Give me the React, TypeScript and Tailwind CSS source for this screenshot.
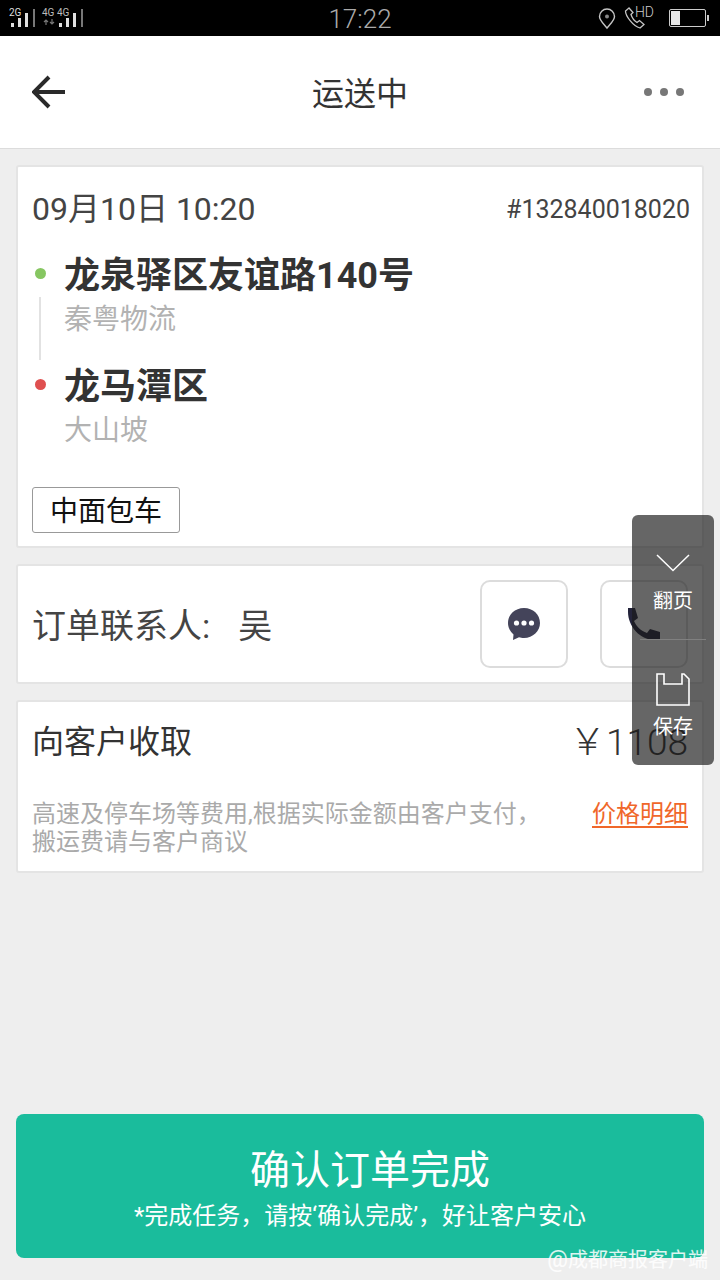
import React from "react";

const FONT = { fontFamily: 'Roboto, "Noto Sans CJK SC", "Noto Sans", sans-serif' };

const SignalIcons = () => (
  <svg width="90" height="36" viewBox="0 0 90 36" className="absolute left-0 top-0">
    <text x="9" y="16" fontSize="10" fill="#ddd" fontFamily="Roboto, sans-serif">2G</text>
    <rect x="11" y="23" width="3" height="4" fill="#e0e0e0" />
    <rect x="18" y="18" width="3" height="9" fill="#e0e0e0" />
    <rect x="25" y="13" width="3" height="14" fill="#e0e0e0" />
    <rect x="33" y="9" width="2" height="18" fill="#777" />
    <text x="42" y="16" fontSize="10" fill="#bbb" fontFamily="Roboto, sans-serif">4G</text>
    <text x="57" y="16" fontSize="10" fill="#bbb" fontFamily="Roboto, sans-serif">4G</text>
    <path d="M46 25 V20 M44 22 L46 20 L48 22 M52 19 V24 M50 22 L52 24 L54 22" stroke="#777" strokeWidth="1.2" fill="none" />
    <rect x="59" y="23" width="3" height="4" fill="#e0e0e0" />
    <rect x="66" y="18" width="3" height="9" fill="#e0e0e0" />
    <rect x="73" y="13" width="3" height="14" fill="#e0e0e0" />
    <rect x="81" y="9" width="2" height="18" fill="#777" />
  </svg>
);

const StatusBar = () => (
  <div className="h-9 bg-black relative flex items-center justify-center shrink-0">
    <SignalIcons />
    <span className="text-[26px] leading-none text-[#aaa] font-light mt-[2px]">17:22</span>
    <div className="absolute right-[11px] top-[6px] flex items-start">
      <svg width="18" height="22" viewBox="0 0 18 22" fill="none" className="mt-[2px]">
        <path
          d="M9 20 C6 16 1.5 12.5 1.5 8.5 A7.5 7.5 0 0 1 16.5 8.5 C16.5 12.5 12 16 9 20 Z"
          stroke="#c4c4c4"
          strokeWidth="1.4"
        />
        <circle cx="9" cy="8.5" r="2" fill="#888" />
      </svg>
      <svg width="22" height="22" viewBox="0 0 22 22" fill="none" className="ml-[8px] mt-[1px]">
        <path
          d="M5 1 L1.5 4 C1.5 9 9 19 16 21 L20 17.5 L15.5 13.5 L13 15.5 C10.5 14 8 10.5 7 7.5 L9 5.5 Z"
          stroke="#c4c4c4"
          strokeWidth="1.3"
        />
      </svg>
      <span className="text-[14px] leading-none text-[#ccc] ml-[-11px] mt-[-1px] font-light">HD</span>
      <div className="ml-[15px] mt-[3px] flex items-center">
        <div className="w-[37px] h-[18px] border border-[#ccc] rounded-[2px] p-[1px]">
          <div className="w-[9px] h-full bg-[#e6e6e6]" />
        </div>
        <span className="w-[2px] h-[6px] ml-[1px] bg-[#ccc]" />
      </div>
    </div>
  </div>
);

const Header = () => (
  <div className="h-[113px] bg-white border-b border-[#dcdcdc] flex items-center justify-between pl-[32px] pr-[36px] relative shrink-0">
    <svg width="34" height="34" viewBox="0 0 34 34" fill="none">
      <path d="M33 17 H3 M17 2 L2 17 L17 32" stroke="#2a2a2a" strokeWidth="4" />
    </svg>
    <span className="absolute inset-x-0 mt-[4px] text-center text-[32px] leading-none text-[#333]">运送中</span>
    <div className="flex gap-[8px]">
      <span className="w-2 h-2 rounded-full bg-[#777]" />
      <span className="w-2 h-2 rounded-full bg-[#777]" />
      <span className="w-2 h-2 rounded-full bg-[#777]" />
    </div>
  </div>
);

const Stop = ({ dot, title, sub }: { dot: string; title: string; sub: string }) => (
  <div className="flex pl-[3px]">
    <span className={`w-[11px] h-[11px] rounded-full mt-[14px] ${dot}`} />
    <div className="ml-[18px]">
      <div className="text-[36px] leading-[44px] font-bold text-[#333]">{title}</div>
      <div className="text-[28px] leading-[38px] mt-[3px] text-[#b2b2b2]">{sub}</div>
    </div>
  </div>
);

const OrderCard = () => (
  <div className="h-[383px] bg-white border-2 border-[#e4e4e4] rounded-[3px] pl-[14px] pr-[12px] pt-[20px]">
    <div className="flex items-center justify-between h-[44px]">
      <span className="text-[32px] leading-none text-[#444]">09月10日 10:20</span>
      <span className="text-[25px] leading-none text-[#444]">#132840018020</span>
    </div>
    <div className="mt-[23px] relative">
      <Stop dot="bg-[#86c661]" title="龙泉驿区友谊路140号" sub="秦粤物流" />
      <span className="absolute left-[7px] top-[43px] w-[2px] h-[63px] bg-[#e2e2e2]" />
      <div className="mt-[26px]">
        <Stop dot="bg-[#df5050]" title="龙马潭区" sub="大山坡" />
      </div>
    </div>
    <div className="mt-[37px] pt-[4px] w-[148px] h-[46px] border border-[#999] rounded-[3px] flex items-center justify-center text-[28px] leading-none text-[#111]">
      中面包车
    </div>
  </div>
);

const ContactCard = () => (
  <div className="mt-[16px] h-[120px] bg-white border-2 border-[#e4e4e4] rounded-[3px] pl-[14px] pr-[14px] flex items-center">
    <span className="text-[34px] leading-none text-[#444] flex-1 mt-[4px]">
      订单联系人:<span className="ml-[28px]">吴</span>
    </span>
    <div className="w-[88px] h-[88px] border-2 border-[#dcdcdc] rounded-[10px] flex items-center justify-center">
      <svg width="34" height="34" viewBox="0 0 34 34">
        <path d="M17 1 C26 1 33 7.5 33 16 C33 24 26 31 17 31 C15 31 13.5 30.7 12 30.2 L6 33 L6.5 27.5 C3 24.5 1 20.5 1 16 C1 7.5 8 1 17 1 Z" fill="#44445a" />
        <circle cx="9.5" cy="16" r="2.6" fill="#fff" />
        <circle cx="17" cy="16" r="2.6" fill="#fff" />
        <circle cx="24.5" cy="16" r="2.6" fill="#fff" />
      </svg>
    </div>
    <div className="ml-[32px] w-[88px] h-[88px] border-2 border-[#dcdcdc] rounded-[10px] flex items-center justify-center">
      <svg width="34" height="34" viewBox="0 0 34 34">
        <path d="M1 1 H8 L11 11 L7 14 C9 19 14 24 20 26 L23 22 L33 25 V33 H27 C13 33 1 19 1 5 Z" fill="#23233a" />
      </svg>
    </div>
  </div>
);

const FeeCard = () => (
  <div className="mt-[16px] h-[173px] bg-white border-2 border-[#e4e4e4] rounded-[3px] pl-[14px] pr-[14px] pt-[20px]">
    <div className="flex items-center justify-between h-[40px]">
      <span className="text-[32px] leading-none text-[#333]">向客户收取</span>
      <span className="text-[37px] leading-none text-[#333] font-light">￥1108</span>
    </div>
    <div className="mt-[38px] flex justify-between items-start">
      <p className="text-[24px] leading-[28px] text-[#aaa]">
        高速及停车场等费用,根据实际金额由客户支付，
        <br />
        搬运费请与客户商议
      </p>
      <span className="text-[24px] leading-[28px] text-[#f0672a] underline underline-offset-4">价格明细</span>
    </div>
  </div>
);

const FloatPanel = () => (
  <div className="absolute left-[632px] top-[515px] w-[82px] h-[250px] rounded-[6px] bg-[#1b1b1b]/[0.67] flex flex-col items-center text-white">
    <svg width="34" height="18" viewBox="0 0 34 18" fill="none" className="mt-[39px]">
      <path d="M1 1 L17 16.5 L33 1" stroke="#fff" strokeWidth="1.5" />
    </svg>
    <span className="text-[20px] leading-none mt-[19px]">翻页</span>
    <span className="w-[66px] h-[1px] bg-[#808080] mt-[28px]" />
    <svg width="34" height="33" viewBox="0 0 34 33" fill="none" className="mt-[33px]">
      <path d="M1 1 H8 V11 H26 V1 H28 L33 6 V32 H1 Z" stroke="#fff" strokeWidth="1.6" />
    </svg>
    <span className="text-[20px] leading-none mt-[11px]">保存</span>
  </div>
);

export default function App() {
  return (
    <div className="relative w-[720px] h-[1280px] bg-[#eeeeee] flex flex-col overflow-hidden" style={FONT}>
      <StatusBar />
      <Header />
      <div className="flex-1 flex flex-col pl-[16px] pr-[16px] pt-[16px] pb-[22px]">
        <OrderCard />
        <ContactCard />
        <FeeCard />
        <button className="mt-auto h-[144px] rounded-[8px] bg-[#1abc9c] text-white flex flex-col items-center">
          <span className="text-[40px] leading-none mt-[37px] ml-[20px]">确认订单完成</span>
          <span className="text-[24px] leading-none mt-[13px]">*完成任务，请按‘确认完成’，好让客户安心</span>
        </button>
      </div>
      <FloatPanel />
      <span className="absolute right-[12px] top-[1248px] text-[20px] leading-none text-white/85">
        <span className="text-[23px]">@</span>成都商报客户端
      </span>
    </div>
  );
}
